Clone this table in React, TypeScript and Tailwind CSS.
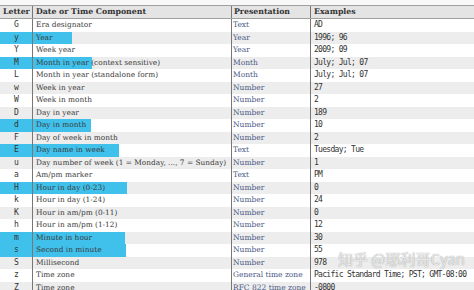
import React from "react";

type Row = {
  letter: string;
  component: string;
  presentation: string;
  example: string;
  mark?: string;
};

const rows: Row[] = [
  { letter: "G", component: "Era designator", presentation: "Text", example: "AD" },
  { letter: "y", component: "Year", presentation: "Year", example: "1996; 96", mark: "w-[72px]" },
  { letter: "Y", component: "Week year", presentation: "Year", example: "2009; 09" },
  { letter: "M", component: "Month in year (context sensitive)", presentation: "Month", example: "July; Jul; 07", mark: "w-[92px]" },
  { letter: "L", component: "Month in year (standalone form)", presentation: "Month", example: "July; Jul; 07" },
  { letter: "w", component: "Week in year", presentation: "Number", example: "27" },
  { letter: "W", component: "Week in month", presentation: "Number", example: "2" },
  { letter: "D", component: "Day in year", presentation: "Number", example: "189" },
  { letter: "d", component: "Day in month", presentation: "Number", example: "10", mark: "w-[91px]" },
  { letter: "F", component: "Day of week in month", presentation: "Number", example: "2" },
  { letter: "E", component: "Day name in week", presentation: "Text", example: "Tuesday; Tue", mark: "w-[119px]" },
  { letter: "u", component: "Day number of week (1 = Monday, ..., 7 = Sunday)", presentation: "Number", example: "1" },
  { letter: "a", component: "Am/pm marker", presentation: "Text", example: "PM" },
  { letter: "H", component: "Hour in day (0-23)", presentation: "Number", example: "0", mark: "w-[127px]" },
  { letter: "k", component: "Hour in day (1-24)", presentation: "Number", example: "24" },
  { letter: "K", component: "Hour in am/pm (0-11)", presentation: "Number", example: "0" },
  { letter: "h", component: "Hour in am/pm (1-12)", presentation: "Number", example: "12" },
  { letter: "m", component: "Minute in hour", presentation: "Number", example: "30", mark: "w-[125px]" },
  { letter: "s", component: "Second in minute", presentation: "Number", example: "55", mark: "w-[126px]" },
  { letter: "S", component: "Millisecond", presentation: "Number", example: "978" },
  { letter: "z", component: "Time zone", presentation: "General time zone", example: "Pacific Standard Time; PST; GMT-08:00" },
  { letter: "Z", component: "Time zone", presentation: "RFC 822 time zone", example: "-0800" },
];

const serif = "font-['DejaVu_Serif',serif]";
const mono = "font-['DejaVu_Sans_Mono',monospace] tracking-[-0.7px]";

export default function App() {
  return (
    <div className="relative w-[474px] h-[290px] overflow-hidden bg-[#f8f8f8] pt-[5px]">
      <div className={`grid grid-cols-[33px_199px_79px_1fr] h-[14px] bg-[#e4e4e4] border-t border-b border-[#a0a0a0] text-[7.8px] font-bold leading-[12px] text-[#333] ${serif}`}>
        <div className="pl-[3px] border-r border-[#777]">Letter</div>
        <div className="pl-[3px] border-r border-[#777]">Date or Time Component</div>
        <div className="pl-[2px] border-r border-[#777]">Presentation</div>
        <div className="pl-[3px]">Examples</div>
      </div>
      {rows.map((r, i) => (
        <div
          key={r.letter}
          className={`relative grid grid-cols-[33px_199px_79px_1fr] h-[12.5px] leading-[12.5px] ${i % 2 ? "bg-[#ededed]" : "bg-white"}`}
        >
          {r.mark && <span className={`absolute left-0 top-0 h-full bg-[#40c1ec] ${r.mark}`} />}
          <div className={`relative text-center text-[8px] text-[#333] border-r border-[#777] ${mono}`}>{r.letter}</div>
          <div className={`relative pl-[3px] text-[7.4px] text-[#3a3a3a] whitespace-nowrap border-r border-[#777] ${serif}`}>
            {r.component}
          </div>
          <div className={`relative pl-[1px] text-[7.5px] text-[#4b5a86] whitespace-nowrap border-r border-[#777] ${serif}`}>
            {r.presentation}
          </div>
          <div className={`relative pl-[3px] text-[8px] text-[#333] whitespace-nowrap ${mono}`}>{r.example}</div>
        </div>
      ))}
      <div className="absolute left-[338px] top-[250px] text-[15px] leading-[18px] text-white/80 font-['Noto_Sans_CJK_SC',sans-serif] [text-shadow:0_0_1px_#777] whitespace-nowrap">
        知乎 @耶利哥Cyan
      </div>
    </div>
  );
}
